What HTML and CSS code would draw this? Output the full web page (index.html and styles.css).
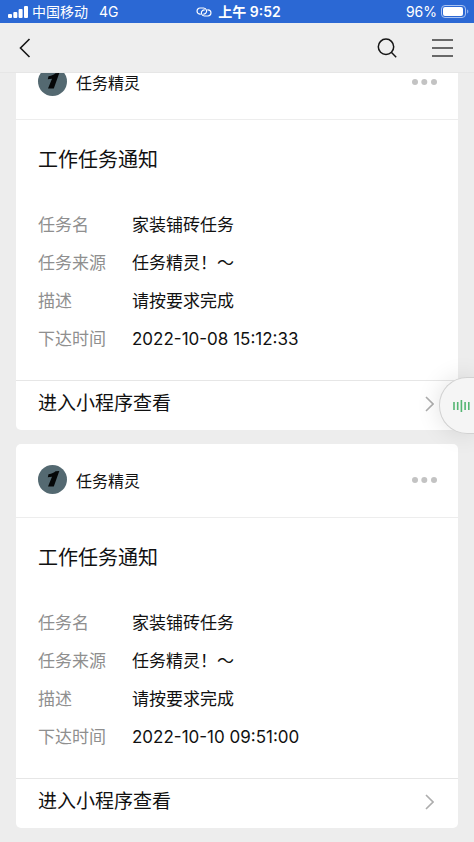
FILE: index.html
```html
<!DOCTYPE html>
<html lang="zh-CN">
<head>
<meta charset="utf-8">
<meta name="viewport" content="width=device-width, initial-scale=1">
<title>任务精灵</title>
<link rel="stylesheet" href="styles.css">
</head>
<body>
<header class="top">
  <div class="status">
    <div class="status-side">
      <svg class="signal" width="20" height="12" viewBox="0 0 20 12" fill="#fff" aria-hidden="true">
        <rect x="0" y="8" width="4" height="4" rx="1"/><rect x="5.300" y="6" width="4" height="6" rx="1"/><rect x="10.600" y="3" width="4" height="9" rx="1"/><rect x="16" y="0" width="4" height="12" rx="1"/>
      </svg>
      <span>中国移动</span>
      <span class="network">4G</span>
    </div>
    <div class="status-time">
      <svg width="16" height="10" viewBox="0 0 16 10" fill="none" stroke="#fff" stroke-width="1.2" stroke-linecap="round" aria-hidden="true">
        <path d="M4.3 7.2A3.1 3.1 0 0 1 4 1h3.6a3.1 3.1 0 0 1 1.9 5.5c-.5.4-1.100.6-1.800.6"/>
        <path d="M11.700 2.800A3.100 3.100 0 0 1 12 9H8.400a3.100 3.100 0 0 1-1.900-5.500c.5-.4 1.100-.6 1.800-.6"/>
      </svg>
      <b>上午 9:52</b>
    </div>
    <div class="status-side status-end">
      <span>96%</span>
      <svg width="28" height="13" viewBox="0 0 28 13" aria-hidden="true">
        <rect x=".5" y=".5" width="24" height="12" rx="3.500" fill="none" stroke="#a9c3f2"/>
        <rect x="2" y="2" width="20" height="9" rx="2" fill="#fff"/>
        <path d="M26 4.500c1.800.5 1.800 3.500 0 4z" fill="#8eaeee"/>
      </svg>
    </div>
  </div>
  <nav class="bar">
    <button class="icon-button" aria-label="返回">
      <svg width="12" height="20" viewBox="0 0 12 20" fill="none" stroke="#151515" stroke-width="1.600"><path d="M10.500 1 1.500 10l9 9"/></svg>
    </button>
    <div class="bar-actions">
      <button class="icon-button" aria-label="搜索">
        <svg width="20" height="20" viewBox="0 0 20 20" fill="none" stroke="#151515" stroke-width="1.500"><circle cx="9" cy="8.800" r="7.700"/><path d="m14.300 14.300 4.900 4.900"/></svg>
      </button>
      <button class="icon-button" aria-label="菜单">
        <svg width="22" height="20" viewBox="0 0 22 20" fill="none" stroke="#3c3c3c" stroke-width="1.500"><path d="M1 2h21M1 10h21M1 18h21"/></svg>
      </button>
    </div>
  </nav>
</header>

<main class="feed">
  <article class="card">
    <header class="card-head">
      <svg class="avatar" width="29" height="29" viewBox="0 0 29 29" aria-hidden="true"><circle cx="14.500" cy="14.500" r="14.500" fill="#546971"/><path d="M10.500 9.200C14 9 16 7.500 17.500 6.300L21.300 6 15.800 21.500H10L14 11.800 9.800 12.300z" fill="#050708"/></svg>
      <span class="sender">任务精灵</span>
      <button class="icon-button more" aria-label="更多">
        <svg width="25" height="6" viewBox="0 0 25 6" fill="#c3c3c3"><circle cx="3" cy="3" r="3"/><circle cx="12.300" cy="3" r="3"/><circle cx="22" cy="3" r="3"/></svg>
      </button>
    </header>
    <section class="card-body">
      <h2>工作任务通知</h2>
      <dl>
        <dt>任务名</dt><dd>家装铺砖任务</dd>
        <dt>任务来源</dt><dd>任务精灵！～</dd>
        <dt>描述</dt><dd>请按要求完成</dd>
        <dt>下达时间</dt><dd>2022-10-08 15:12:33</dd>
      </dl>
    </section>
    <a class="card-link" href="#">
      <span>进入小程序查看</span>
      <svg width="9" height="16" viewBox="0 0 9 16" fill="none" stroke="#adadad" stroke-width="1.600"><path d="m1 1 7 7-7 7"/></svg>
    </a>
  </article>

  <article class="card">
    <header class="card-head">
      <svg class="avatar" width="29" height="29" viewBox="0 0 29 29" aria-hidden="true"><circle cx="14.500" cy="14.500" r="14.500" fill="#546971"/><path d="M10.500 9.200C14 9 16 7.500 17.500 6.300L21.300 6 15.800 21.500H10L14 11.800 9.800 12.300z" fill="#050708"/></svg>
      <span class="sender">任务精灵</span>
      <button class="icon-button more" aria-label="更多">
        <svg width="25" height="6" viewBox="0 0 25 6" fill="#c3c3c3"><circle cx="3" cy="3" r="3"/><circle cx="12.300" cy="3" r="3"/><circle cx="22" cy="3" r="3"/></svg>
      </button>
    </header>
    <section class="card-body">
      <h2>工作任务通知</h2>
      <dl>
        <dt>任务名</dt><dd>家装铺砖任务</dd>
        <dt>任务来源</dt><dd>任务精灵！～</dd>
        <dt>描述</dt><dd>请按要求完成</dd>
        <dt>下达时间</dt><dd>2022-10-10 09:51:00</dd>
      </dl>
    </section>
    <a class="card-link" href="#">
      <span>进入小程序查看</span>
      <svg width="9" height="16" viewBox="0 0 9 16" fill="none" stroke="#adadad" stroke-width="1.600"><path d="m1 1 7 7-7 7"/></svg>
    </a>
  </article>
</main>

<button class="float" aria-label="语音">
  <svg width="17" height="12" viewBox="0 0 17 12" fill="none" stroke="#55b673" stroke-width="1.600"><path d="M1 2v8M4.700 2v8M8.400 0v12M12.100 2v8M15.800 2v8"/></svg>
</button>
</body>
</html>
```
FILE: styles.css
```css
* {
  box-sizing: border-box;
}

body {
  margin: 0;
  background: #ededed;
  color: #111;
  font-family: Inter, "Noto Sans CJK SC", sans-serif;
  font-size: 17px;
}

svg {
  display: block;
  flex: none;
}

.top {
  position: sticky;
  top: 0;
  z-index: 1;
}

.status {
  display: flex;
  align-items: center;
  height: 23px;
  padding: 0 5px 0 8px;
  background: #2b68d4;
  color: #fff;
  font-size: 14px;
  line-height: 23px;
  white-space: nowrap;
}

.status-side {
  display: flex;
  flex: 1;
  align-items: center;
  gap: 4px;
}

.status-end {
  justify-content: flex-end;
}

.network {
  margin-left: 7px;
}

.status-time {
  display: flex;
  align-items: center;
  gap: 6px;
}

.status-time b {
  font-weight: 600;
}

.bar {
  display: flex;
  align-items: center;
  justify-content: space-between;
  height: 50px;
  padding: 0 21px 0 19px;
  border-bottom: 1px solid #e6e6e6;
  background: #eee;
}

.bar-actions {
  display: flex;
  gap: 34px;
}

.icon-button {
  padding: 0;
  border: 0;
  background: none;
}

.feed {
  display: grid;
  gap: 14px;
  margin-top: -27px;
  padding: 0 16px 14px;
}

.card {
  border-radius: 5px;
  background: #fff;
}

.card-head {
  display: flex;
  align-items: center;
  gap: 9px;
  height: 74px;
  padding: 0 21px 2px 22px;
  border-bottom: 1px solid #ededed;
}

.sender {
  font-size: 16px;
}

.more {
  margin-left: auto;
}

.card-body {
  padding: 26px 22px 22px;
}

h2 {
  margin: 0 0 32px;
  font-size: 20px;
  font-weight: 400;
  line-height: 28px;
}

dl {
  display: grid;
  grid-template-columns: 94px 1fr;
  margin: 0;
  line-height: 38px;
}

dt {
  color: #8f8f8f;
}

dd {
  margin: 0;
}

.card-link {
  display: flex;
  align-items: center;
  justify-content: space-between;
  height: 50px;
  padding: 0 24px 3px 22px;
  border-top: 1px solid #e6e6e6;
  color: inherit;
  font-size: 19px;
  line-height: 28px;
  text-decoration: none;
}

.float {
  position: fixed;
  top: 377px;
  right: 0;
  z-index: 2;
  width: 35px;
  height: 57px;
  padding: 0 0 0 13px;
  border: 1px solid #d2d2d2;
  border-right: 0;
  border-radius: 28px 0 0 28px;
  background: #f5f5f5;
  box-shadow: 0 0 24px rgb(0 0 0 / 12%);
}
```
